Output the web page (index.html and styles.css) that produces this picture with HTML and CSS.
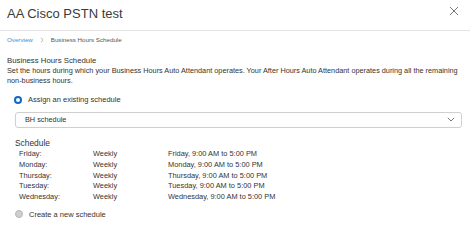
FILE: index.html
```html
<!DOCTYPE html>
<html>
<head>
<meta charset="utf-8">
<link rel="stylesheet" href="styles.css">
</head>
<body>
<div class="header">
  <div class="title">AA Cisco PSTN test</div>
  <svg class="close" width="10" height="10" viewBox="0 0 10 10"><path d="M1 1 L9 9 M9 1 L1 9" stroke="#666" stroke-width="0.9" fill="none"/></svg>
</div>
<div class="crumbs">
  <span class="crumb-link">Overview</span>
  <svg class="crumb-sep" width="4" height="6" viewBox="0 0 4 6"><path d="M1 0.8 L3 3 L1 5.2" stroke="#999" stroke-width="0.7" fill="none"/></svg>
  <span class="crumb-current">Business Hours Schedule</span>
</div>
<div class="content">
  <div class="heading">Business Hours Schedule</div>
  <div class="desc">Set the hours during which your Business Hours Auto Attendant operates. Your After Hours Auto Attendant operates during all the remaining non&#8209;business hours.</div>
  <div class="radio-row first">
    <span class="radio on"></span>
    <span class="radio-label">Assign an existing schedule</span>
  </div>
  <div class="select">
    <span>BH schedule</span>
    <svg width="8" height="5" viewBox="0 0 8 5"><path d="M0.8 0.8 L4 4 L7.2 0.8" stroke="#555" stroke-width="0.8" fill="none"/></svg>
  </div>
  <div class="schedule">
    <div class="sched-title">Schedule</div>
    <div class="sched-grid">
      <span>Friday:</span><span>Weekly</span><span>Friday, 9:00 AM to 5:00 PM</span>
      <span>Monday:</span><span>Weekly</span><span>Monday, 9:00 AM to 5:00 PM</span>
      <span>Thursday:</span><span>Weekly</span><span>Thursday, 9:00 AM to 5:00 PM</span>
      <span>Tuesday:</span><span>Weekly</span><span>Tuesday, 9:00 AM to 5:00 PM</span>
      <span>Wednesday:</span><span>Weekly</span><span>Wednesday, 9:00 AM to 5:00 PM</span>
    </div>
  </div>
  <div class="radio-row second">
    <span class="radio off"></span>
    <span class="radio-label">Create a new schedule</span>
  </div>
</div>
</body>
</html>
```
FILE: styles.css
```css
* { box-sizing: border-box; }
body {
  margin: 0;
  background: #fff;
  font-family: "Liberation Sans", Arial, sans-serif;
  color: #333;
}
.header {
  height: 31px;
  display: flex;
  align-items: center;
  justify-content: space-between;
  padding: 0 11px 4px 7px;
  border-bottom: 1px solid #e2e2e2;
  margin-right: 4px;
}
.title {
  font-size: 13px;
  color: #3a3a3a;
}
.close { display: block; margin-top: -4px; }
.crumbs {
  display: flex;
  align-items: center;
  gap: 7px;
  padding: 0 7px;
  height: 17px;
  font-size: 6.2px;
}
.crumb-link { color: #3b8ed8; }
.crumb-current { color: #555; }
.crumb-sep { display: block; }
.content { padding: 0 7px; }
.heading {
  margin-top: 6.5px;
  font-size: 7.8px;
  line-height: 11px;
  color: #333;
}
.desc {
  font-size: 7.3px;
  line-height: 10.3px;
  color: #333;
}
.radio-row {
  display: flex;
  align-items: center;
  gap: 6px;
  font-size: 7.5px;
  height: 10px;
  color: #333;
}
.radio-row.first { margin-top: 8.8px; padding-left: 7px; }
.radio-row.second { margin-top: 7px; padding-left: 8px; }
.radio {
  width: 8px;
  height: 8px;
  border-radius: 50%;
  display: block;
  flex: none;
}
.radio.on { border: 2.2px solid #0e6ac5; background: #fff; }
.radio.off { background: #cfcfcf; border: 0.7px solid #b5b5b5; }
.select {
  margin: 7px 5px 0 8px;
  height: 16px;
  border: 1px solid #cfcfcf;
  border-radius: 3px;
  display: flex;
  align-items: center;
  justify-content: space-between;
  padding: 0 6px 0 9px;
  font-size: 7.3px;
  color: #333;
}
.select svg { display: block; }
.schedule { margin-top: 10.5px; padding-left: 8px; }
.sched-title {
  font-size: 8.4px;
  line-height: 11px;
}
.sched-grid {
  display: grid;
  grid-template-columns: 74px 75px auto;
  padding-left: 4px;
  font-size: 7.4px;
  line-height: 10.6px;
  color: #333;
}
```
